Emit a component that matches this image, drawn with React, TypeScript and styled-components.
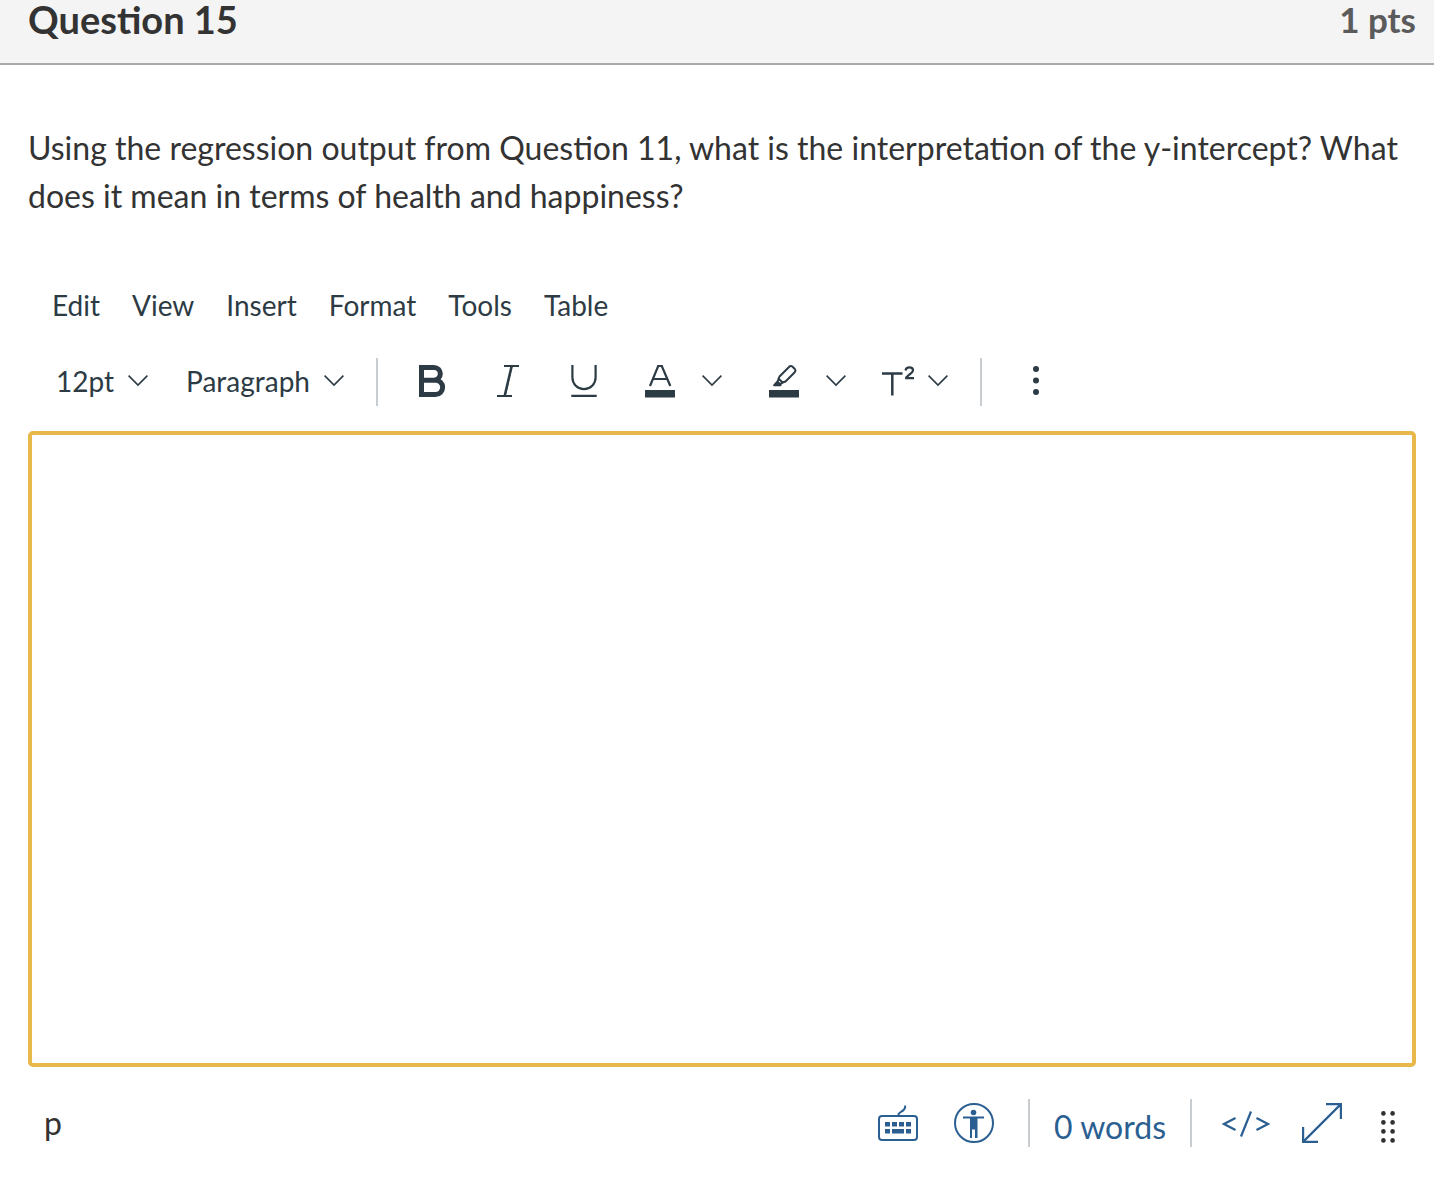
import React, { useState } from "react";
import styled, { createGlobalStyle } from "styled-components";

const ink = "#2d3b45";
const link = "#2b5f92";

const GlobalStyle = createGlobalStyle`
  *, *::before, *::after { box-sizing: border-box; }
  body {
    margin: 0;
    background: #ffffff;
    color: #333333;
    font-family: Lato, "Liberation Sans", sans-serif;
    -webkit-font-smoothing: antialiased;
  }
  button, select, textarea { font: inherit; color: inherit; }
`;

const Header = styled.header`
  display: flex;
  justify-content: space-between;
  align-items: flex-start;
  height: 65px;
  padding: 0 18px 0 28px;
  background: #f4f4f4;
  border-bottom: 2px solid #a9a9a9;
`;

const Title = styled.h1`
  margin: 0;
  font-size: 38px;
  line-height: 38px;
  font-weight: 700;
`;

const Points = styled.span`
  font-size: 35px;
  line-height: 38px;
  font-weight: 700;
  color: #5b5b5b;
`;

const Body = styled.main`
  padding: 59px 18px 0 28px;
`;

const Prompt = styled.p`
  margin: 0 0 61px;
  font-size: 32px;
  line-height: 48px;
`;

const MenuBar = styled.nav`
  display: flex;
  gap: 32px;
  padding: 0 24px;
  color: ${ink};
`;

const MenuButton = styled.button`
  padding: 0;
  border: 0;
  background: none;
  font-size: 28px;
  line-height: 48px;
`;

const Toolbar = styled.div`
  display: flex;
  align-items: flex-start;
  height: 48px;
  margin: 29px 0 25px;
  padding-left: 28px;
  color: ${ink};
`;

const Group = styled.div<{ $gap?: number; $before?: number; $after?: number }>`
  display: flex;
  align-items: center;
  gap: ${(p) => p.$gap ?? 0}px;
  margin-left: ${(p) => p.$before ?? 0}px;
  margin-right: ${(p) => p.$after ?? 0}px;
`;

const Picker = styled.label`
  display: flex;
  align-items: center;
  gap: 14px;
`;

const PickerSelect = styled.select`
  appearance: none;
  field-sizing: content;
  height: 46px;
  padding: 0;
  border: 0;
  background: none;
  font-size: 28px;
  line-height: 46px;
`;

const ToolButton = styled.button<{ $width?: number }>`
  display: flex;
  align-items: center;
  justify-content: center;
  width: ${(p) => p.$width ?? 52}px;
  height: 46px;
  padding: 0;
  border: 0;
  background: none;
`;

const Divider = styled.span`
  width: 2px;
  height: 48px;
  background: #c7cdd1;
`;

const Editor = styled.textarea`
  display: block;
  width: 100%;
  height: 636px;
  padding: 20px;
  border: 4px solid #e8b84a;
  border-radius: 5px;
  outline: none;
  resize: none;
  font-size: 32px;
  line-height: 48px;
`;

const StatusBar = styled.footer`
  display: flex;
  align-items: center;
  justify-content: space-between;
  padding: 32px 18px 32px 16px;
  color: ${link};
`;

const Path = styled.button`
  padding: 0;
  border: 0;
  background: none;
  font-size: 32px;
  line-height: 46px;
  color: #333333;
`;

const WordCount = styled.button`
  padding: 8px 0 0;
  border: 0;
  background: none;
  font-size: 32px;
  line-height: 40px;
`;

const Grip = styled.button`
  display: flex;
  width: 20px;
  height: 48px;
  padding: 8px 0 0;
  align-items: center;
  justify-content: center;
  border: 0;
  background: none;
  color: #2f3131;
`;

const Icon = styled.svg`
  display: block;
  flex: none;
  fill: none;
  stroke: currentColor;
`;

const Chevron = () => (
  <Icon width="20" height="14" viewBox="0 0 20 14" strokeWidth="1.6" aria-hidden>
    <path d="M.6 1.6 10 11 19.4 1.6" />
  </Icon>
);

const BoldIcon = () => (
  <Icon width="28" height="34" viewBox="0 0 28 34" strokeWidth="5" aria-hidden>
    <path d="M3.500 3.500H16a6.300 6.300 0 0 1 0 12.700H3.500M3.500 16.200H17.500a7 7 0 0 1 0 14.300H3.500M3.500 1V33" />
  </Icon>
);

const ItalicIcon = () => (
  <Icon width="24" height="34" viewBox="0 0 24 34" strokeWidth="2.200" aria-hidden>
    <path d="M8 2H23M1 32H16M15.500 2 8.500 32" />
    <path d="M16.200 2 9.200 32" strokeWidth="1.500" />
  </Icon>
);

const UnderlineIcon = () => (
  <Icon width="28" height="34" viewBox="0 0 28 34" strokeWidth="2.200" aria-hidden>
    <path d="M2.400 1V13.500a11.600 11.600 0 0 0 23.200 0V1M1.300 31.900H26.700" />
  </Icon>
);

const TextColorIcon = () => (
  <Icon width="30" height="34" viewBox="0 0 30 34" strokeWidth="2.200" aria-hidden>
    <path d="M5 22 13.200 2H16.800L25.300 22M8 15H22.500" />
    <path d="M0 26H30V33.500H0Z" fill="currentColor" stroke="none" />
  </Icon>
);

const HighlightIcon = () => (
  <Icon width="30" height="34" viewBox="0 0 30 34" strokeWidth="2" strokeLinejoin="round" aria-hidden>
    <path d="M10.500 12.500 20 3Q21.500 1.200 23.300 2.500L25.800 5Q27.200 6.800 25.500 8.500L16.500 17.500 13.500 18.500 9.700 14.700Z" />
    <path d="M9.700 14.700 8.800 17.200 5.200 21.200H11.500L12 19.500 13.800 18.300" />
    <path d="M8.800 17 4 21.700H11.500L12 19.500Z" fill="currentColor" stroke="none" />
    <path d="M0 26H30V33.500H0Z" fill="currentColor" stroke="none" />
  </Icon>
);

const SuperscriptIcon = () => (
  <Icon width="32" height="34" viewBox="0 0 32 34" strokeWidth="2.500" aria-hidden>
    <path d="M0 9.500H20.500M10.300 9.500V31.500" />
    <path d="M23.500 6.500Q24 3.300 27.500 3.300 31 3.300 31 6.200 31 8.300 27.500 10.500L24.200 13.500V14.200H32" strokeWidth="2.200" />
  </Icon>
);

const MoreIcon = () => (
  <Icon width="6" height="30" viewBox="0 0 6 30" aria-hidden>
    {[3, 14.5, 26].map((y) => (
      <circle key={y} cx="3" cy={y} r="3" fill="currentColor" stroke="none" />
    ))}
  </Icon>
);

const KeyboardIcon = () => (
  <Icon width="40" height="40" viewBox="0 0 40 40" strokeWidth="2" aria-hidden>
    <rect x="1" y="13" width="38" height="24" rx="3" />
    <path d="M20.200 13Q20 10.500 23.500 8.500 27.500 6.500 27.200 2.500" />
    <path
      d="M7 19h5v4.500H7zM14 19h5v4.500H14zM21 19h5v4.500H21zM28 19h5v4.500H28zM7 26h5v4.500H7zM14 26h12v4.500H14zM28 26h5v4.500H28z"
      fill="currentColor"
      stroke="none"
    />
  </Icon>
);

const AccessibilityIcon = () => (
  <Icon width="40" height="40" viewBox="0 0 40 40" strokeWidth="2" aria-hidden>
    <circle cx="20" cy="20" r="19" />
    <circle cx="19.500" cy="9.500" r="2.800" fill="currentColor" stroke="none" />
    <path d="M9 14.500H30" />
    <path d="M16 14h7.500v21H21V26.500H18V35H16z" fill="currentColor" stroke="none" />
  </Icon>
);

const CodeIcon = () => (
  <Icon width="48" height="28" viewBox="0 0 48 28" strokeWidth="2.200" aria-hidden>
    <path d="M13.500 9 2 15 13.500 21M34.500 9 46 15 34.500 21M29 2.500 19 27.500" />
  </Icon>
);

const ExpandIcon = () => (
  <Icon width="40" height="40" viewBox="0 0 40 40" strokeWidth="2.200" aria-hidden>
    <path d="M24 1.100H38.900V16M1.100 24V38.900H16M1.100 38.900 38.900 1.100" />
  </Icon>
);

const GripIcon = () => (
  <Icon width="16" height="32" viewBox="0 0 16 32" aria-hidden>
    {[2.4, 11.4, 20.4, 29.4].map((y) => (
      <g key={y} fill="currentColor" stroke="none">
        <circle cx="3.400" cy={y} r="2.300" />
        <circle cx="12.600" cy={y} r="2.300" />
      </g>
    ))}
  </Icon>
);

const menus = ["Edit", "View", "Insert", "Format", "Tools", "Table"];

export default function App() {
  const [answer, setAnswer] = useState("");
  const words = answer.trim() ? answer.trim().split(/\s+/).length : 0;

  return (
    <>
      <GlobalStyle />
      <Header>
        <Title>Question 15</Title>
        <Points>1 pts</Points>
      </Header>
      <Body>
        <Prompt>
          Using the regression output from Question 11, what is the interpretation of the
          y-intercept? What does it mean in terms of health and happiness?
        </Prompt>
        <MenuBar aria-label="Editor menu">
          {menus.map((name) => (
            <MenuButton key={name} type="button">{name}</MenuButton>
          ))}
        </MenuBar>
        <Toolbar role="toolbar" aria-label="Formatting">
          <Group $gap={38}>
            <Picker>
              <PickerSelect aria-label="Font size">
                <option>12pt</option>
              </PickerSelect>
              <Chevron />
            </Picker>
            <Picker>
              <PickerSelect aria-label="Block style">
                <option>Paragraph</option>
              </PickerSelect>
              <Chevron />
            </Picker>
          </Group>
          <Group $before={32} $after={28}><Divider /></Group>
          <Group $gap={24} $after={24}>
            <ToolButton type="button" aria-label="Bold"><BoldIcon /></ToolButton>
            <ToolButton type="button" aria-label="Italic"><ItalicIcon /></ToolButton>
            <ToolButton type="button" aria-label="Underline"><UnderlineIcon /></ToolButton>
          </Group>
          <Group $after={20}>
            <ToolButton type="button" aria-label="Text color"><TextColorIcon /></ToolButton>
            <ToolButton type="button" aria-label="Text color options"><Chevron /></ToolButton>
          </Group>
          <Group $after={10}>
            <ToolButton type="button" aria-label="Highlight"><HighlightIcon /></ToolButton>
            <ToolButton type="button" aria-label="Highlight options"><Chevron /></ToolButton>
          </Group>
          <Group>
            <ToolButton type="button" aria-label="Superscript"><SuperscriptIcon /></ToolButton>
            <ToolButton type="button" aria-label="Script options" $width={28}><Chevron /></ToolButton>
          </Group>
          <Group $before={28} $after={28}><Divider /></Group>
          <ToolButton type="button" aria-label="More"><MoreIcon /></ToolButton>
        </Toolbar>
        <Editor aria-label="Answer" value={answer} onChange={(e) => setAnswer(e.target.value)} />
        <StatusBar>
          <Path type="button">p</Path>
          <Group>
            <Group $gap={36} $after={34}>
              <ToolButton type="button" aria-label="Keyboard shortcuts" $width={40}><KeyboardIcon /></ToolButton>
              <ToolButton type="button" aria-label="Accessibility checker" $width={40}><AccessibilityIcon /></ToolButton>
            </Group>
            <Group $gap={24} $after={30}>
              <Divider />
              <WordCount type="button">{words} words</WordCount>
              <Divider />
            </Group>
            <Group $gap={32} $after={36}>
              <ToolButton type="button" aria-label="HTML editor" $width={48}><CodeIcon /></ToolButton>
              <ToolButton type="button" aria-label="Fullscreen" $width={40}><ExpandIcon /></ToolButton>
            </Group>
            <Grip type="button" aria-label="Resize"><GripIcon /></Grip>
          </Group>
        </StatusBar>
      </Body>
    </>
  );
}
